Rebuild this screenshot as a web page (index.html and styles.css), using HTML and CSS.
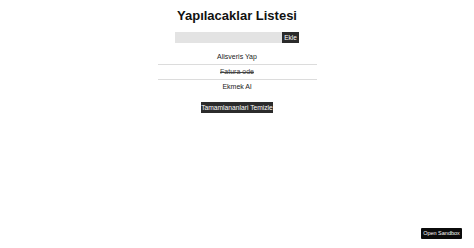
FILE: index.html
```html
<!DOCTYPE html>
<html lang="tr">
<head>
<meta charset="utf-8">
<title>Yapılacaklar Listesi</title>
<link rel="stylesheet" href="styles.css">
</head>
<body>
<main class="app">
  <h1 class="title">Yapılacaklar Listesi</h1>
  <form class="add-row">
    <input class="add-input" type="text">
    <button class="add-btn" type="button">Ekle</button>
  </form>
  <ul class="todo-list">
    <li class="todo">Alisveris Yap</li>
    <li class="todo done">Fatura ode</li>
    <li class="todo">Ekmek Al</li>
  </ul>
  <button class="clear-btn" type="button">Tamamlananlari Temizle</button>
</main>
<a class="sandbox-btn" href="#">Open Sandbox</a>
</body>
</html>
```
FILE: styles.css
```css
html, body {
  margin: 0;
  padding: 0;
  background: #ffffff;
}
body {
  font-family: "Liberation Sans", Arial, sans-serif;
  color: #222;
}
.app {
  display: flex;
  flex-direction: column;
  align-items: center;
  padding-top: 7px;
}
.title {
  margin: 0;
  font-size: 13px;
  font-weight: bold;
  line-height: 17px;
  color: #111;
}
.add-row {
  display: flex;
  margin-top: 8px;
}
.add-input {
  width: 107px;
  height: 11px;
  box-sizing: border-box;
  border: none;
  padding: 0;
  margin: 0;
  background: #e3e3e3;
}
.add-btn {
  height: 11px;
  width: 17px;
  box-sizing: border-box;
  border: none;
  padding: 0;
  margin: 0;
  background: #2b2b2b;
  color: #fff;
  font-family: inherit;
  font-size: 6.5px;
}
.todo-list {
  list-style: none;
  margin: 7px 0 0;
  padding: 0;
  width: 159px;
}
.todo {
  text-align: center;
  font-size: 7px;
  line-height: 14px;
  border-bottom: 1px solid #dcdcdc;
  color: #222;
}
.todo:last-child {
  border-bottom: none;
}
.todo.done {
  text-decoration: line-through;
  color: #444;
}
.clear-btn {
  margin-top: 8px;
  height: 11px;
  width: 72px;
  padding: 0;
  border: none;
  background: #2b2b2b;
  color: #fff;
  font-family: inherit;
  font-size: 6.7px;
  line-height: 11px;
}
.sandbox-btn {
  position: fixed;
  right: 12px;
  bottom: 9px;
  width: 41px;
  height: 11px;
  box-sizing: border-box;
  background: #0b0b0b;
  color: #fff;
  font-size: 5.5px;
  line-height: 11px;
  text-align: center;
  text-decoration: none;
  border-radius: 1px;
}
```
